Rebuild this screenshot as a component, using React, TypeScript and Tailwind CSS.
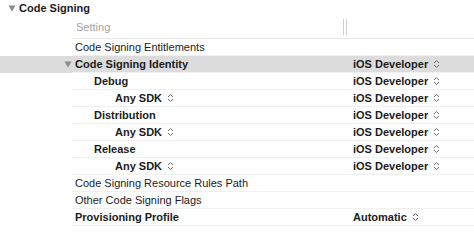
import React from 'react';

type Row = {
  name: string;
  indent: number;
  bold?: boolean;
  value?: string;
  open?: boolean;
  selected?: boolean;
};

const rows: Row[] = [
  { name: 'Code Signing Entitlements', indent: 0 },
  { name: 'Code Signing Identity', indent: 0, bold: true, open: true, selected: true, value: 'iOS Developer' },
  { name: 'Debug', indent: 19, bold: true, value: 'iOS Developer' },
  { name: 'Any SDK', indent: 40, bold: true, value: 'iOS Developer' },
  { name: 'Distribution', indent: 19, bold: true, value: 'iOS Developer' },
  { name: 'Any SDK', indent: 40, bold: true, value: 'iOS Developer' },
  { name: 'Release', indent: 19, bold: true, value: 'iOS Developer' },
  { name: 'Any SDK', indent: 40, bold: true, value: 'iOS Developer' },
  { name: 'Code Signing Resource Rules Path', indent: 0 },
  { name: 'Other Code Signing Flags', indent: 0 },
  { name: 'Provisioning Profile', indent: 0, bold: true, value: 'Automatic' },
];

const sdkRows = new Set([3, 5, 7]);

const Disclosure = () => (
  <svg width="8" height="7" viewBox="0 0 8 7" className="shrink-0">
    <polygon points="0.5,0.5 7.5,0.5 4,6.5" fill="#8a8a8a" />
  </svg>
);

const Stepper = () => (
  <svg width="7" height="10" viewBox="0 0 7 10" className="shrink-0 ml-[5px]">
    <polyline points="1,4 3.5,1.5 6,4" fill="none" stroke="#6e6e6e" strokeWidth="1" />
    <polyline points="1,6 3.5,8.5 6,6" fill="none" stroke="#6e6e6e" strokeWidth="1" />
  </svg>
);

export default function App() {
  return (
    <div
      className="w-[474px] h-[244px] bg-white text-[11px] text-[#1b1b1b] overflow-hidden"
      style={{ fontFamily: '"Liberation Sans", Arial, sans-serif' }}
    >
      {/* section header */}
      <div className="h-[16px] flex items-center pl-[8px]">
        <Disclosure />
        <span className="ml-[3px] font-bold">Code Signing</span>
      </div>

      {/* column header */}
      <div className="ml-[72px] h-[23px] border-b border-[#e8e8e8] flex items-center">
        <div className="w-[271px] pl-[4px] text-[#a3a3a3]">Setting</div>
        <div className="flex gap-[2px] h-[16px]">
          <div className="w-px bg-[#cbd3cb]" />
          <div className="w-px bg-[#cbd3cb]" />
        </div>
      </div>

      {rows.map((row, i) => (
        <div key={i} className={row.selected ? 'bg-[#dcdcdc]' : ''}>
          <div className="ml-[72px] h-[17px] border-b border-[#f0f0f0] flex items-center">
            <div className="w-[281px] flex items-center" style={{ paddingLeft: 3 + row.indent }}>
              {row.open && (
                <span className="-ml-[11px] mr-[3px] flex">
                  <Disclosure />
                </span>
              )}
              <span className={row.bold ? 'font-bold' : ''}>{row.name}</span>
              {sdkRows.has(i) && <Stepper />}
            </div>
            {row.value && (
              <div className="flex items-center font-bold">
                <span>{row.value}</span>
                <Stepper />
              </div>
            )}
          </div>
        </div>
      ))}
    </div>
  );
}
